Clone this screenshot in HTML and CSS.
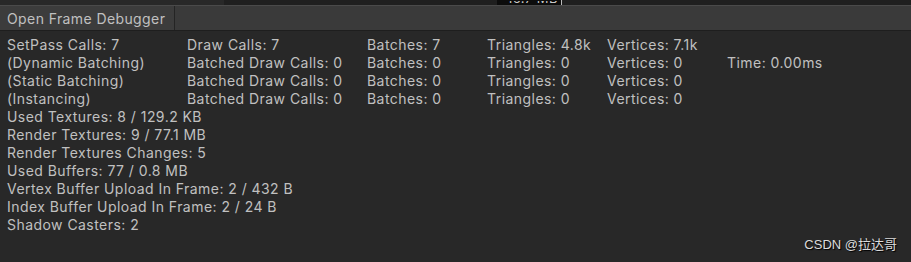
FILE: index.html
```html
<!DOCTYPE html>
<html lang="en">
<head>
  <meta charset="UTF-8">
  <title>Frame Debugger Stats</title>
  <link rel="stylesheet" href="styles.css">
</head>
<body>
  <div class="topstrip">
    <div class="topstrip-left"></div>
    <div class="memory-box"><span>16.7 MB</span></div>
    <div class="caret"></div>
  </div>
  <div class="toolbar">
    <button class="tool-btn">Open Frame Debugger</button>
  </div>
  <main class="stats">
    <div class="grid">
      <span>SetPass Calls: 7</span><span>Draw Calls: 7</span><span>Batches: 7</span><span>Triangles: 4.8k</span><span>Vertices: 7.1k</span><span></span>
      <span>(Dynamic Batching)</span><span>Batched Draw Calls: 0</span><span>Batches: 0</span><span>Triangles: 0</span><span>Vertices: 0</span><span>Time: 0.00ms</span>
      <span>(Static Batching)</span><span>Batched Draw Calls: 0</span><span>Batches: 0</span><span>Triangles: 0</span><span>Vertices: 0</span><span></span>
      <span>(Instancing)</span><span>Batched Draw Calls: 0</span><span>Batches: 0</span><span>Triangles: 0</span><span>Vertices: 0</span><span></span>
    </div>
    <div class="line">Used Textures: 8 / 129.2 KB</div>
    <div class="line">Render Textures: 9 / 77.1 MB</div>
    <div class="line">Render Textures Changes: 5</div>
    <div class="line">Used Buffers: 77 / 0.8 MB</div>
    <div class="line">Vertex Buffer Upload In Frame: 2 / 432 B</div>
    <div class="line">Index Buffer Upload In Frame: 2 / 24 B</div>
    <div class="line">Shadow Casters: 2</div>
  </main>
  <div class="watermark">CSDN @拉达哥</div>
</body>
</html>
```

FILE: styles.css
```css
body {
  margin: 0;
  width: 911px;
  height: 262px;
  overflow: hidden;
  background: #282828;
  color: #c0c0c0;
  font-family: Inter, "Noto Sans", "Noto Sans CJK SC", sans-serif;
  font-size: 14px;
  letter-spacing: 0.45px;
  position: relative;
}

.topstrip {
  height: 5px;
  display: flex;
  background: #1f1f1f;
  overflow: hidden;
  position: relative;
}
.topstrip-left {
  width: 224px;
  background: #282828;
}
.memory-box {
  margin-left: 273px;
  width: 64px;
  background: #0c0c0c;
  position: relative;
  overflow: hidden;
}
.memory-box span {
  position: absolute;
  left: 10px;
  bottom: 0;
  color: #c8c8c8;
  font-size: 13px;
  line-height: 13px;
  height: 4px;
  overflow: hidden;
  display: flex;
  align-items: flex-end;
}
.caret {
  width: 1px;
  background: #bcbcbc;
}

.toolbar {
  height: 24px;
  background: #3a3a3a;
  border-top: 1px solid #4a4a4a;
  border-bottom: 1px solid #1e1e1e;
  display: flex;
}
.tool-btn {
  background: #3c3c3c;
  border: none;
  border-right: 1px solid #242424;
  color: #c0c0c0;
  font-family: inherit;
  font-size: 14px;
  letter-spacing: 0.4px;
  padding: 0 6px 0 7px;
  width: 175px;
  text-align: left;
  height: 24px;
  white-space: nowrap;
}

.stats {
  padding: 5px 0 0 7px;
  line-height: 18px;
}
.grid {
  display: grid;
  grid-template-columns: 180px 180px 120px 120px 120px 120px;
  white-space: nowrap;
}
.line {
  height: 18px;
}

.watermark {
  position: absolute;
  right: 14px;
  bottom: 9px;
  color: #dcdcdc;
  font-family: "Liberation Sans", "Noto Sans CJK SC", sans-serif;
  font-size: 13px;
  letter-spacing: 0;
  text-shadow: 1px 1px 1px #000;
}
```
